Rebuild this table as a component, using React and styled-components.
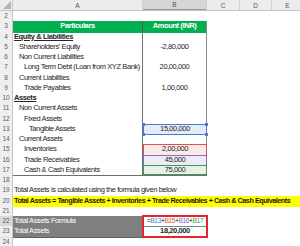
import React from 'react';
import styled, { createGlobalStyle, css } from 'styled-components';

const GlobalStyle = createGlobalStyle`
  html, body {
    margin: 0;
    padding: 0;
    background: #fff;
  }
  body {
    font-family: 'Liberation Sans', Arial, sans-serif;
  }
`;

const ROW_H = 10.25;
const GRID = '13px 130px 64px 33px 32px 32px';

const tones = {
  blue: { border: '#4a7bd0', fill: '#e3ecf8' },
  red: { border: '#d9534f', fill: '#fbe9e9' },
  purple: { border: '#8a6cc4', fill: '#efeaf8' },
  green: { border: '#3f9a55', fill: '#e6f2e8' },
};

const rows = [
  { n: 4, label: 'Equity & Liabilities', heading: true },
  { n: 5, label: "Shareholders' Equity", indent: 1, value: '-2,80,000' },
  { n: 6, label: 'Non Current Liabilities', indent: 1 },
  { n: 7, label: 'Long Term Debt (Loan from XYZ Bank)', indent: 2, value: '20,00,000' },
  { n: 8, label: 'Current Liabilities', indent: 1 },
  { n: 9, label: 'Trade Payables', indent: 2, value: '1,00,000' },
  { n: 10, label: 'Assets', heading: true },
  { n: 11, label: 'Non Current Assets', indent: 1 },
  { n: 12, label: 'Fixed Assets', indent: 2 },
  { n: 13, label: 'Tangible Assets', indent: 3, value: '15,00,000', tone: 'blue' },
  { n: 14, label: 'Current Assets', indent: 1 },
  { n: 15, label: 'Inventories', indent: 2, value: '2,00,000', tone: 'red' },
  { n: 16, label: 'Trade Receivables', indent: 2, value: '45,000', tone: 'purple' },
  { n: 17, label: 'Cash & Cash Equivalents', indent: 2, value: '75,000', tone: 'green', last: true },
];

const App = () => {
  return (
    <>
      <GlobalStyle />
      <Sheet>
        <HeadRow>
          <Corner>
            <svg width="8" height="8" viewBox="0 0 8 8">
              <path d="M8 0 V8 H0 Z" fill="#b4b4b4" />
            </svg>
          </Corner>
          <ColHead>A</ColHead>
          <ColHead active>B</ColHead>
          <ColHead>C</ColHead>
          <ColHead>D</ColHead>
          <ColHead>E</ColHead>
        </HeadRow>

        <Row>
          <RowNum>2</RowNum>
        </Row>

        <Row>
          <RowNum>3</RowNum>
          <TitleCell divider>Particulars</TitleCell>
          <TitleCell>Amount (INR)</TitleCell>
        </Row>

        {rows.map((r) => (
          <Row key={r.n}>
            <RowNum>{r.n}</RowNum>
            <LabelCell indent={r.indent || 0} heading={r.heading} last={r.last}>
              {r.heading ? <u>{r.label}</u> : r.label}
            </LabelCell>
            <AmountCell last={r.last}>
              {r.tone ? (
                <Highlight tone={r.tone}>
                  {r.value}
                  {r.tone === 'blue' && (
                    <>
                      <Handle top left />
                      <Handle top />
                      <Handle left />
                      <Handle />
                    </>
                  )}
                </Highlight>
              ) : (
                r.value
              )}
            </AmountCell>
          </Row>
        ))}

        <Row>
          <RowNum>18</RowNum>
        </Row>

        <Row>
          <RowNum>19</RowNum>
          <SpanCell>Total Assets is calculated using the formula given below</SpanCell>
        </Row>

        <Row>
          <RowNum>20</RowNum>
          <SpanCell marked>
            Total Assets = Tangible Assets + Inventories + Trade Receivables + Cash &amp; Cash Equivalents
          </SpanCell>
        </Row>

        <Row>
          <RowNum>21</RowNum>
        </Row>

        <ResultBlock>
          <Row>
            <RowNum active>22</RowNum>
            <GreyCell>Total Assets Formula</GreyCell>
            <ResultCell formula>
              <span>=</span>
              <Ref tone="blue">B13</Ref>+<Ref tone="red">B15</Ref>+<Ref tone="purple">B16</Ref>+
              <Ref tone="green">B17</Ref>
            </ResultCell>
          </Row>
          <Row>
            <RowNum>23</RowNum>
            <GreyCell>Total Assets</GreyCell>
            <ResultCell bold>18,20,000</ResultCell>
          </Row>
          <RedFrame />
        </ResultBlock>

        <Row>
          <RowNum>24</RowNum>
        </Row>
      </Sheet>
    </>
  );
};

const Sheet = styled.div`
  width: 300px;
  height: 246px;
  overflow: hidden;
  background: #fff;
  color: #262626;
  font-size: 7.5px;
  letter-spacing: -0.4px;
`;

const HeadRow = styled.div`
  display: grid;
  grid-template-columns: ${GRID};
  height: 11px;
  background: #ececec;
  border-bottom: 1px solid #c6c6c6;
  box-sizing: border-box;
`;

const Corner = styled.div`
  display: flex;
  align-items: flex-end;
  justify-content: flex-end;
  padding: 0 1px 1px 0;
  border-right: 1px solid #c6c6c6;
`;

const ColHead = styled.div`
  display: flex;
  align-items: center;
  justify-content: center;
  font-size: 6.5px;
  color: #555;
  letter-spacing: 0;
  border-right: 1px solid #d0d0d0;
  ${(p) =>
    p.active &&
    css`
      background: #d6d6d6;
      border-bottom: 1px solid #9a9a9a;
    `}
`;

const Row = styled.div`
  display: grid;
  grid-template-columns: ${GRID};
  height: ${ROW_H}px;
  line-height: ${ROW_H}px;
  white-space: nowrap;
`;

const RowNum = styled.div`
  background: ${(p) => (p.active ? '#d8d8d8' : '#efefef')};
  border-right: 1px solid #c6c6c6;
  border-bottom: 1px solid #dedede;
  box-sizing: border-box;
  color: #606060;
  font-size: 6.5px;
  letter-spacing: 0;
  text-align: center;
`;

const TitleCell = styled.div`
  background: #00b050;
  color: #fff;
  font-weight: bold;
  text-align: center;
  border-right: 1px solid ${(p) => (p.divider ? '#5a5a5a' : '#8a8a8a')};
`;

const LabelCell = styled.div`
  padding-left: ${(p) => 1 + p.indent * 5}px;
  border-right: 1px solid #6e6e6e;
  overflow: hidden;
  ${(p) => p.heading && 'font-weight: bold;'}
  ${(p) => p.last && 'border-bottom: 1px solid #6e6e6e;'}
  box-sizing: border-box;
`;

const AmountCell = styled.div`
  position: relative;
  text-align: center;
  border-right: 1px solid #8a8a8a;
  ${(p) => p.last && 'border-bottom: 1px solid #6e6e6e;'}
  box-sizing: border-box;
`;

const Highlight = styled.div`
  position: absolute;
  inset: 0 -1px 0 0;
  background: ${(p) => tones[p.tone].fill};
  border: 1px solid ${(p) => tones[p.tone].border};
  box-sizing: border-box;
  line-height: ${ROW_H - 2}px;
  text-align: center;
`;

const Handle = styled.span`
  position: absolute;
  width: 3px;
  height: 3px;
  background: #4a7bd0;
  ${(p) => (p.top ? 'top: -2px;' : 'bottom: -2px;')}
  ${(p) => (p.left ? 'left: -2px;' : 'right: -2px;')}
`;

const SpanCell = styled.div`
  grid-column: 2 / -1;
  padding-left: 1px;
  overflow: hidden;
  ${(p) =>
    p.marked &&
    css`
      background: #ffff00;
      font-weight: bold;
      color: #1a1a1a;
      font-size: 7.2px;
      letter-spacing: -0.45px;
    `}
`;

const ResultBlock = styled.div`
  position: relative;
`;

const GreyCell = styled.div`
  background: #7f7f7f;
  color: #fff;
  padding-left: 1px;
  border-bottom: 1px solid #5f5f5f;
  box-sizing: border-box;
`;

const ResultCell = styled.div`
  text-align: center;
  box-sizing: border-box;
  ${(p) =>
    p.formula &&
    css`
      border-bottom: 1px solid #5f8f78;
      font-size: 6.8px;
      letter-spacing: -0.5px;
    `}
  ${(p) => p.bold && 'font-weight: bold;'}
`;

const Ref = styled.span`
  color: ${(p) => tones[p.tone].border};
`;

const RedFrame = styled.div`
  position: absolute;
  left: 142px;
  top: -1px;
  width: 66px;
  height: ${ROW_H * 2 + 2}px;
  border: 2px solid #e3262b;
  box-sizing: border-box;
  pointer-events: none;
`;

export default App;
